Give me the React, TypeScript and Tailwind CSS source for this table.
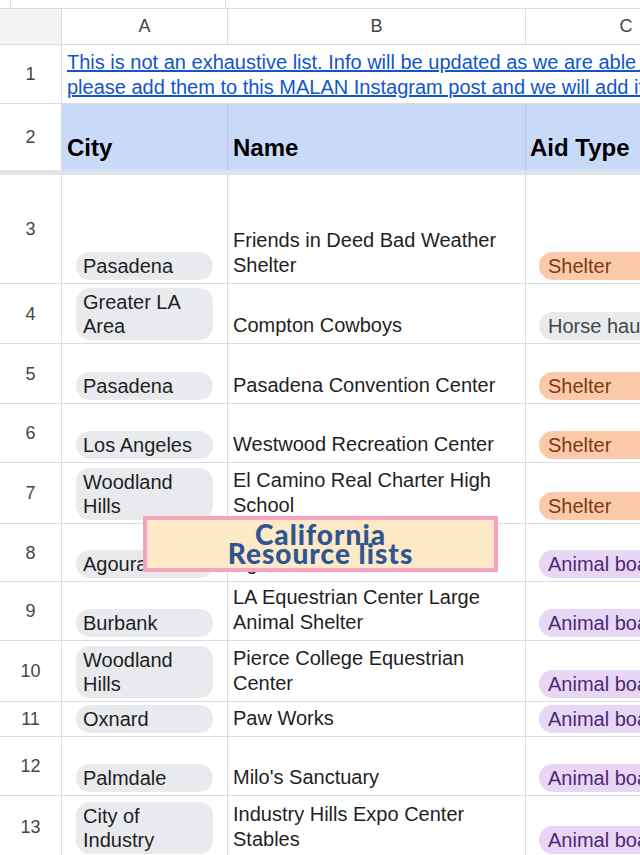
type Tone = "gray" | "orange" | "purple";

type Row = {
  n: number;
  h: string;
  city: string[];
  name: string[];
  aid: string;
  tone: Tone;
};

const rows: Row[] = [
  { n: 3, h: "h-[109px]", city: ["Pasadena"], name: ["Friends in Deed Bad Weather", "Shelter"], aid: "Shelter", tone: "orange" },
  { n: 4, h: "h-[60px]", city: ["Greater LA", "Area"], name: ["Compton Cowboys"], aid: "Horse hauling", tone: "gray" },
  { n: 5, h: "h-[60px]", city: ["Pasadena"], name: ["Pasadena Convention Center"], aid: "Shelter", tone: "orange" },
  { n: 6, h: "h-[59px]", city: ["Los Angeles"], name: ["Westwood Recreation Center"], aid: "Shelter", tone: "orange" },
  { n: 7, h: "h-[61px]", city: ["Woodland", "Hills"], name: ["El Camino Real Charter High", "School"], aid: "Shelter", tone: "orange" },
  { n: 8, h: "h-[58px]", city: ["Agoura Hills"], name: ["Agoura Hills Animal Clinic"], aid: "Animal boarding", tone: "purple" },
  { n: 9, h: "h-[59px]", city: ["Burbank"], name: ["LA Equestrian Center Large", "Animal Shelter"], aid: "Animal boarding", tone: "purple" },
  { n: 10, h: "h-[61px]", city: ["Woodland", "Hills"], name: ["Pierce College Equestrian", "Center"], aid: "Animal boarding", tone: "purple" },
  { n: 11, h: "h-[35px]", city: ["Oxnard"], name: ["Paw Works"], aid: "Animal boarding", tone: "purple" },
  { n: 12, h: "h-[59px]", city: ["Palmdale"], name: ["Milo's Sanctuary"], aid: "Animal boarding", tone: "purple" },
  { n: 13, h: "h-[62px]", city: ["City of", "Industry"], name: ["Industry Hills Expo Center", "Stables"], aid: "Animal boarding", tone: "purple" },
];

const toneClass: Record<Tone, string> = {
  gray: "bg-[#e8eaed] text-[#444746]",
  orange: "bg-[#fbc9a9] text-[#7b3811]",
  purple: "bg-[#e7d6f4] text-[#4b2a78]",
};

function Lines({ lines }: { lines: string[] }) {
  return (
    <>
      {lines.map((l, i) => (
        <span key={i} className="block whitespace-nowrap">
          {l}
        </span>
      ))}
    </>
  );
}

export default function App() {
  return (
    <div className="relative w-[640px] h-[855px] overflow-hidden bg-white text-[#1f1f1f] font-['Liberation_Sans',Arial,sans-serif]">
      {/* top strip */}
      <div className="flex h-[9px] border-b border-[#dadce0]">
        <div className="w-[11px] border-r border-[#dadce0]" />
        <div className="w-[215px] border-r border-[#dadce0]" />
      </div>

      {/* column letters */}
      <div className="flex h-[36px] border-b border-[#dadce0] text-[18px] text-[#444746]">
        <div className="w-[62px] shrink-0 bg-[#f1f3f4] border-r border-[#dadce0]" />
        <div className="w-[166px] shrink-0 flex items-center justify-center border-r border-[#dadce0]">A</div>
        <div className="w-[298px] shrink-0 flex items-center justify-center border-r border-[#dadce0]">B</div>
        <div className="w-[200px] shrink-0 flex items-center justify-center">C</div>
      </div>

      {/* row 1 */}
      <div className="flex h-[59px] border-b border-[#dadce0]">
        <div className="w-[62px] shrink-0 flex items-center justify-center border-r border-[#dadce0] text-[18px] text-[#444746]">1</div>
        <div className="flex-1 flex flex-col justify-center pl-[5px] pt-[2px] text-[20px] leading-[25px] text-[#1155cc] underline overflow-hidden">
          <span className="whitespace-nowrap">This is not an exhaustive list. Info will be updated as we are able to</span>
          <span className="whitespace-nowrap">please add them to this MALAN Instagram post and we will add it</span>
        </div>
      </div>

      {/* row 2 header */}
      <div className="flex h-[66px]">
        <div className="w-[62px] shrink-0 flex items-center justify-center border-r border-[#dadce0] text-[18px] text-[#444746]">2</div>
        <div className="flex-1 flex bg-[#c9daf8] text-[24px] font-bold text-black">
          <div className="w-[166px] shrink-0 flex items-end pl-[5px] pb-[4px] border-r border-[#b7c7e6]">City</div>
          <div className="w-[298px] shrink-0 flex items-end pl-[5px] pb-[4px] border-r border-[#b7c7e6]">Name</div>
          <div className="flex-1 flex items-end pl-[4px] pb-[4px] whitespace-nowrap">Aid Type</div>
        </div>
      </div>
      <div className="h-[5px] bg-[#e1e3e6]" />

      {/* data rows */}
      {rows.map((r) => (
        <div key={r.n} className={`flex ${r.h} border-b border-[#dadce0] text-[20px] leading-[24px]`}>
          <div className="w-[62px] shrink-0 flex items-center justify-center border-r border-[#dadce0] text-[18px] text-[#444746]">
            {r.n}
          </div>
          <div className="w-[166px] shrink-0 flex items-end px-[14px] pb-[3px] border-r border-[#dadce0]">
            <div className="w-full rounded-[14px] bg-[#e8eaed] px-[7px] py-[2px]">
              <Lines lines={r.city} />
            </div>
          </div>
          <div className="w-[298px] shrink-0 flex items-end pl-[5px] pb-[5px] leading-[25px] border-r border-[#dadce0]">
            <div>
              <Lines lines={r.name} />
            </div>
          </div>
          <div className="flex-1 flex items-end pl-[13px] pb-[3px] overflow-hidden">
            <div className={`w-[200px] shrink-0 rounded-[14px] px-[9px] py-[2px] whitespace-nowrap ${toneClass[r.tone]}`}>
              {r.aid}
            </div>
          </div>
        </div>
      ))}

      {/* title banner */}
      <div className="absolute left-[143px] top-[516px] w-[355px] h-[56px] border-[4px] border-[#f5a3c1] bg-[#fde9c8] flex flex-col items-center justify-center font-['Lato',sans-serif] font-black text-[#2f5691] text-[28px] leading-[19px]">
        <span className="tracking-[1px]">California</span>
        <span className="tracking-[1px]">Resource lists</span>
      </div>
    </div>
  );
}
